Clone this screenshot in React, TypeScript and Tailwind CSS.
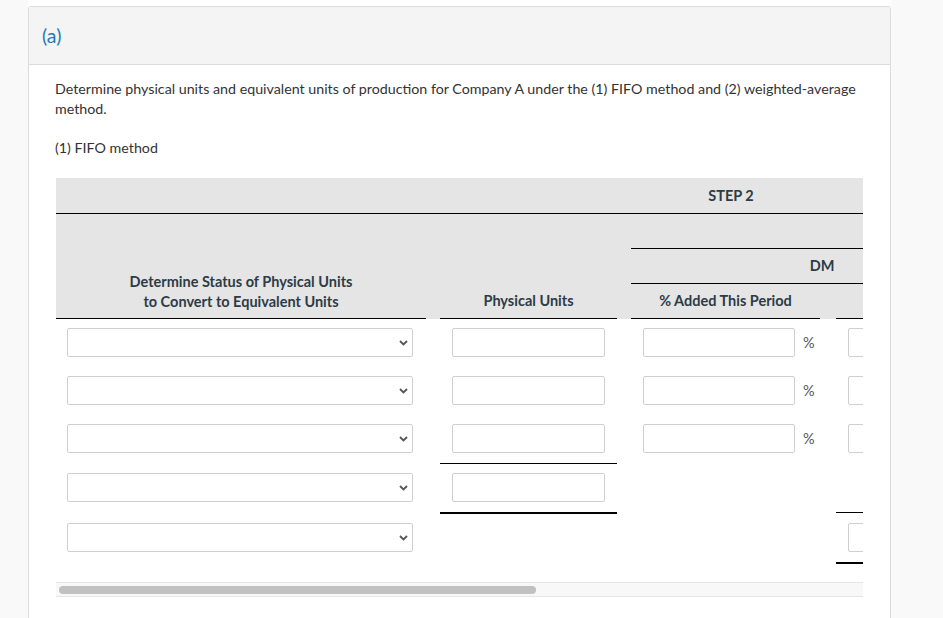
import React from 'react';

const Chevron = () => (
  <svg width="9" height="6" viewBox="0 0 9 6" className="text-[#555]">
    <path d="M1 1l3.5 3.5L8 1" fill="none" stroke="currentColor" strokeWidth="1.8" />
  </svg>
);

const SelectBox = () => (
  <div className="w-[346px] h-[29px] bg-white border border-[#cfcfcf] rounded-[2px] flex items-center justify-end pr-[4px]">
    <Chevron />
  </div>
);

const InputBox = ({ w = 'w-[153px]' }: { w?: string }) => (
  <div className={`${w} h-[29px] bg-white border border-[#cfcfcf] rounded-[2px]`} />
);

// body cells: content-box so the bottom rules add to the row height
const rows = [
  { phys: true, physRule: '', dm: true, eq: true, eqRule: '' },
  { phys: true, physRule: '', dm: true, eq: true, eqRule: '' },
  { phys: true, physRule: 'border-b border-black', dm: true, eq: true, eqRule: '' },
  { phys: true, physRule: 'border-b-2 border-black', dm: false, eq: false, eqRule: 'border-b border-black' },
  { phys: false, physRule: '', dm: false, eq: true, eqRule: 'border-b-2 border-black' },
];

const App: React.FC = () => {
  return (
    <div className="min-h-screen bg-[#f9f9f9] flex text-[#333]" style={{ fontFamily: 'Lato, "Open Sans", sans-serif' }}>
      <div className="w-[28px] shrink-0" />
      <div className="w-[863px] shrink-0 bg-white pt-[6px] flex flex-col">
        <div className="flex-1 border border-[#dcdcdc] border-b-0 rounded-t-[3px] flex flex-col">
          {/* Part header */}
          <div className="h-[58px] bg-[#f4f4f4] border-b border-[#dcdcdc] flex items-center px-[13px]">
            <span className="text-[19.5px] text-[#1f7bb6]">(a)</span>
          </div>

          <div className="px-[26px] pt-[14px]">
            <p className="text-[14.25px] leading-[19.5px]">
              Determine physical units and equivalent units of production for Company A under the (1) FIFO method and (2) weighted-average method.
            </p>
            <p className="text-[14.25px] leading-[20px] mt-[20px]">(1) FIFO method</p>

            {/* Table, scrolled horizontally */}
            <div className="mt-[20px] ml-[1px] w-[807px] overflow-hidden">
              <div className="w-[1350px] text-[#2d3b45]">
                <div className="bg-[#e5e5e5]">
                  <div className="h-[36px] border-b border-black flex items-center justify-center text-[14.5px] font-bold">
                    STEP 2
                  </div>
                  <div className="flex items-stretch text-[14.5px] font-bold">
                    <div className="w-[370px] h-[105px] border-b border-black flex flex-col justify-end items-center pb-[7px] leading-[19.5px] text-center">
                      <span>Determine Status of Physical Units</span>
                      <span>to Convert to Equivalent Units</span>
                    </div>
                    <div className="w-[14px] shrink-0" />
                    <div className="w-[177px] h-[105px] border-b border-black flex items-end justify-center pb-[8px] leading-[19px]">
                      Physical Units
                    </div>
                    <div className="w-[14px] shrink-0" />
                    <div className="flex-1 flex flex-col">
                      <div className="h-[35px] border-b border-black" />
                      <div className="flex">
                        <div className="w-[382px]">
                          <div className="h-[35px] border-b border-black flex items-center justify-center">DM</div>
                          <div className="flex">
                            <div className="w-[189px] h-[35px] border-b border-black flex items-center justify-center">
                              % Added This Period
                            </div>
                            <div className="w-[16px] shrink-0" />
                            <div className="w-[177px] h-[35px] border-b border-black" />
                          </div>
                        </div>
                        <div className="w-[16px] shrink-0" />
                        <div className="flex-1">
                          <div className="h-[35px] border-b border-black" />
                          <div className="h-[35px] border-b border-black" />
                        </div>
                      </div>
                    </div>
                  </div>
                </div>

                {/* Body rows */}
                {rows.map((r, i) => (
                  <div key={i} className="flex items-start">
                    <div className="w-[359px] box-content h-[39px] pt-[9px] pl-[11px] flex">
                      <SelectBox />
                    </div>
                    <div className="w-[14px] shrink-0" />
                    <div className={`w-[165px] box-content h-[39px] pt-[9px] pl-[12px] ${r.physRule}`}>
                      {r.phys && <InputBox />}
                    </div>
                    <div className="w-[14px] shrink-0" />
                    <div className="w-[177px] box-content h-[39px] pt-[9px] pl-[12px] flex items-start gap-[8px]">
                      {r.dm && (
                        <>
                          <InputBox w="w-[152px]" />
                          <span className="text-[14.5px] text-[#555] leading-[29px]">%</span>
                        </>
                      )}
                    </div>
                    <div className="w-[16px] shrink-0" />
                    <div className={`w-[165px] box-content h-[39px] pt-[9px] pl-[12px] ${r.eqRule}`}>
                      {r.eq && <InputBox />}
                    </div>
                  </div>
                ))}
              </div>
            </div>

            {/* Horizontal scrollbar */}
            <div className="mt-[18px] ml-[1px] w-[807px] h-[15px] bg-[#f8f8f8] border-y border-[#e6e6e6] flex items-center px-[3px]">
              <div className="w-[477px] h-[8px] rounded-full bg-[#c1c1c1]" />
            </div>
          </div>
        </div>
      </div>
      <div className="flex-1" />
    </div>
  );
};

export default App;
